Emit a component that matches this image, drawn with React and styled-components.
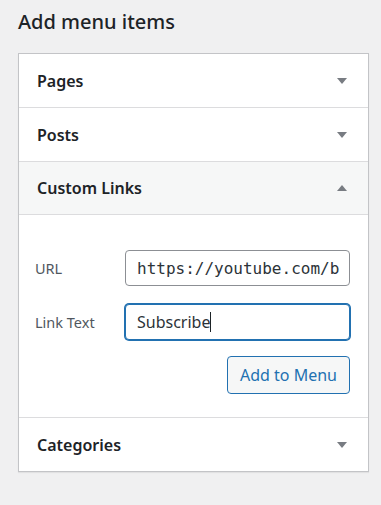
import React from "react";
import styled, { createGlobalStyle } from "styled-components";

const GlobalStyle = createGlobalStyle`
  html, body {
    margin: 0;
    padding: 0;
    background: #f0f0f1;
  }
  body {
    font-family: "Noto Sans", "Open Sans", sans-serif;
    color: #1d2327;
  }
`;

const sections = [
  { id: "pages", title: "Pages" },
  { id: "posts", title: "Posts" },
  { id: "custom", title: "Custom Links", open: true },
  { id: "categories", title: "Categories" },
];

const App = () => {
  return (
    <>
      <GlobalStyle />
      <Page>
        <Heading>Add menu items</Heading>
        <Panel>
          {sections.map((s) => (
            <Section key={s.id}>
              <SectionHeader open={s.open}>
                <SectionTitle>{s.title}</SectionTitle>
                <Arrow up={s.open} />
              </SectionHeader>
              {s.open ? <CustomLinks /> : null}
            </Section>
          ))}
        </Panel>
      </Page>
    </>
  );
};

const CustomLinks = () => (
  <Body>
    <FieldRow>
      <Label>URL</Label>
      <Field mono>https://youtube.com/b</Field>
    </FieldRow>
    <FieldRow>
      <Label>Link Text</Label>
      <Field focused>
        Subscribe
        <Caret />
      </Field>
    </FieldRow>
    <Actions>
      <Button>Add to Menu</Button>
    </Actions>
  </Body>
);

const Page = styled.div`
  padding: 8px 12px 30px 18px;
`;

const Heading = styled.h2`
  margin: 0 0 17px 0;
  font-size: 20px;
  line-height: 28px;
  font-weight: 500;
  color: #1d2327;
`;

const Panel = styled.div`
  background: #fff;
  border: 1px solid #c3c4c7;
  box-shadow: 0 1px 1px rgba(0, 0, 0, 0.06);
`;

const Section = styled.div`
  border-bottom: 1px solid #dcdcde;
  &:last-child {
    border-bottom: none;
  }
`;

const SectionHeader = styled.div`
  height: 53px;
  box-sizing: border-box;
  display: flex;
  align-items: center;
  justify-content: space-between;
  padding: 0 21px 0 18px;
  background: ${(p) => (p.open ? "#f6f7f7" : "#fff")};
  border-bottom: ${(p) => (p.open ? "1px solid #dcdcde" : "none")};
`;

const SectionTitle = styled.span`
  font-size: 16px;
  font-weight: 600;
  color: #1d2327;
`;

const Arrow = styled.span`
  width: 0;
  height: 0;
  border-left: 5px solid transparent;
  border-right: 5px solid transparent;
  ${(p) =>
    p.up
      ? "border-bottom: 6px solid #787c82;"
      : "border-top: 6px solid #787c82;"}
`;

const Body = styled.div`
  padding: 35px 18px 23px 16px;
  display: flex;
  flex-direction: column;
  gap: 18px;
`;

const FieldRow = styled.div`
  display: grid;
  grid-template-columns: 90px 1fr;
  align-items: center;
`;

const Label = styled.span`
  font-size: 14.5px;
  color: #50575e;
`;

const Field = styled.div`
  height: 36px;
  box-sizing: border-box;
  display: flex;
  align-items: center;
  padding: 0 11px;
  border: 1px solid ${(p) => (p.focused ? "#2271b1" : "#8c8f94")};
  box-shadow: ${(p) => (p.focused ? "0 0 0 1px #2271b1" : "none")};
  border-radius: 4px;
  background: #fff;
  overflow: hidden;
  white-space: nowrap;
  color: #2c3338;
  font-size: 16px;
  font-family: ${(p) =>
    p.mono
      ? '"DejaVu Sans Mono", "Liberation Mono", monospace'
      : '"Noto Sans", "Open Sans", sans-serif'};
`;

const Caret = styled.span`
  display: inline-block;
  width: 1px;
  height: 20px;
  background: #1d2327;
`;

const Actions = styled.div`
  display: flex;
  justify-content: flex-end;
  margin-top: -2px;
`;

const Button = styled.button`
  height: 38px;
  padding: 0 12px;
  font-size: 16px;
  font-family: "Noto Sans", "Open Sans", sans-serif;
  color: #2271b1;
  background: #f6f7f7;
  border: 1px solid #2271b1;
  border-radius: 4px;
  cursor: pointer;
`;

export default App;
